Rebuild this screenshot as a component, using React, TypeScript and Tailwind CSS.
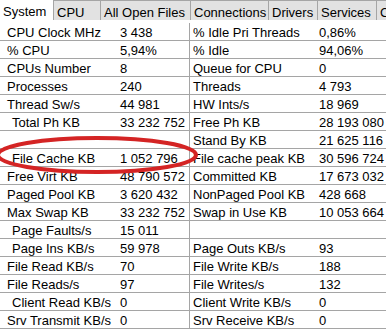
import React from 'react';

// Vier Spalten: Name links, Wert links, Name rechts, Wert rechts
const rows: [string, string, string, string][] = [
    ['CPU Clock MHz', '3 438', '% Idle Pri Threads', '0,86%'],
    ['% CPU', '5,94%', '% Idle', '94,06%'],
    ['CPUs Number', '8', 'Queue for CPU', '0'],
    ['Processes', '240', 'Threads', '4 793'],
    ['Thread Sw/s', '44 981', 'HW Ints/s', '18 969'],
    [' Total Ph KB', '33 232 752', 'Free Ph KB', '28 193 080'],
    ['', '', 'Stand By KB', '21 625 116'],
    [' File Cache KB', '1 052 796', 'File cache peak KB', '30 596 724'],
    ['Free Virt KB', '48 790 572', 'Committed KB', '17 673 032'],
    ['Paged Pool KB', '3 620 432', 'NonPaged Pool KB', '428 668'],
    ['Max Swap KB', '33 232 752', 'Swap in Use KB', '10 053 664'],
    [' Page Faults/s', '15 011', '', ''],
    [' Page Ins KB/s', '59 978', 'Page Outs KB/s', '93'],
    ['File Read KB/s', '70', 'File Write KB/s', '188'],
    ['File Reads/s', '97', 'File Writes/s', '132'],
    [' Client Read KB/s', '0', 'Client Write KB/s', '0'],
    ['Srv Transmit KB/s', '0', 'Srv Receive KB/s', '0']
];

const tabs = [
    { label: 'CPU', w: 'w-[48px]' },
    { label: 'All Open Files', w: 'w-[91px]' },
    { label: 'Connections', w: 'w-[79px]' },
    { label: 'Drivers', w: 'w-[50px]' },
    { label: 'Services', w: 'w-[60px]' },
    { label: 'C', w: 'w-[40px]' }
];

function Label({ text }: { text: string }) {
    const indented = text.startsWith(' ');
    return <span className={indented ? 'pl-[5px]' : ''}>{text.trim()}</span>;
}

export default function App() {
    return (
        <div className="w-[386px] h-[329px] overflow-hidden bg-white text-black text-[13px] leading-none font-['Liberation_Sans',Arial,sans-serif]">
            {/* Tab bar */}
            <div className="flex h-[20px] whitespace-nowrap">
                <div className="w-[53px] shrink-0 pl-[3px] pt-[5px] bg-white">System</div>
                {tabs.map((t) => (
                    <div
                        key={t.label}
                        className={`${t.w} shrink-0 overflow-hidden px-[3px] pt-[5px] bg-[#e2e2e2] border-l border-r border-t border-[#a5a5a5] -mr-px`}
                    >
                        {t.label}
                    </div>
                ))}
            </div>

            {/* Values */}
            <div className="relative mt-[3px]">
                <div className="grid grid-cols-[117px_73px_126px_70px]">
                    {rows.map((r, i) => (
                        <React.Fragment key={i}>
                            <div className="h-[18px] pl-[7px] pt-[3px] border-b border-[#a5a5a5] whitespace-nowrap">
                                <Label text={r[0]} />
                            </div>
                            <div className="h-[18px] pl-[3px] pt-[3px] border-b border-r border-[#a5a5a5] whitespace-nowrap">
                                {r[1]}
                            </div>
                            <div className="h-[18px] pl-[3px] pt-[3px] border-b border-[#a5a5a5] whitespace-nowrap">
                                {r[2]}
                            </div>
                            <div className="h-[18px] pl-[3px] pt-[3px] border-b border-[#a5a5a5] whitespace-nowrap">
                                {r[3]}
                            </div>
                        </React.Fragment>
                    ))}
                </div>

                {/* roter Kringel um File Cache */}
                <svg className="absolute left-0 top-0 pointer-events-none" width="386" height="306">
                    <ellipse cx="97" cy="132" rx="99" ry="17" fill="none" stroke="#d42424" strokeWidth="4" />
                </svg>
            </div>
        </div>
    );
}
